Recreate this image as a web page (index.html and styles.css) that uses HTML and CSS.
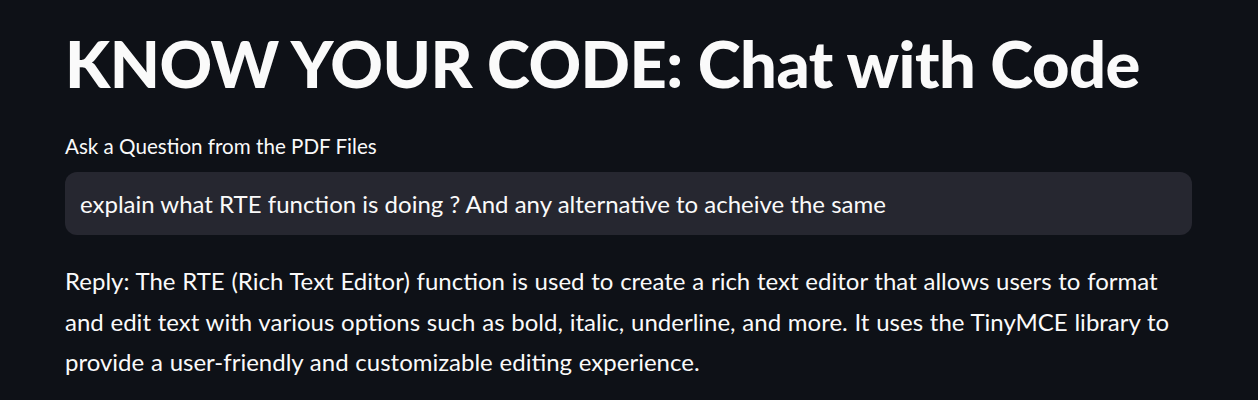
FILE: index.html
```html
<!DOCTYPE html>
<html lang="en">
<head>
<meta charset="utf-8">
<title>KNOW YOUR CODE</title>
<link rel="stylesheet" href="styles.css">
</head>
<body>
<main class="app">
  <h1 class="title">KNOW YOUR CODE: Chat with Code</h1>
  <div class="field">
    <label class="field-label" for="q">Ask a Question from the PDF Files</label>
    <div class="input-wrap">
      <input id="q" class="input" type="text" value="explain what RTE function is doing ? And any alternative to acheive the same">
    </div>
  </div>
  <p class="reply">Reply: The RTE (Rich Text Editor) function is used to create a rich text editor that allows users to format and edit text with various options such as bold, italic, underline, and more. It uses the TinyMCE library to provide a user-friendly and customizable editing experience.</p>
</main>
</body>
</html>
```
FILE: styles.css
```css
html, body {
  margin: 0;
  padding: 0;
  background: #0e1117;
  color: #fafafa;
  font-family: "Lato", "Noto Sans", sans-serif;
}

.app {
  width: 1127px;
  padding: 22px 0 0 65px;
  display: flex;
  flex-direction: column;
}

.title {
  margin: 0;
  font-size: 65px;
  font-weight: 900;
  line-height: 82px;
  letter-spacing: -0.5px;
}

.field {
  margin-top: 28px;
  display: flex;
  flex-direction: column;
  gap: 12px;
}

.field-label {
  font-size: 20.6px;
  line-height: 28px;
}

.input-wrap {
  background: #262730;
  border-radius: 12px;
  height: 63px;
  display: flex;
  align-items: center;
  padding: 0 15px;
}

.input {
  flex: 1;
  border: none;
  outline: none;
  background: transparent;
  color: #fafafa;
  font-family: inherit;
  font-size: 24px;
  padding: 0;
}

.reply {
  margin: 26px 0 0;
  max-width: 1110px;
  font-size: 24px;
  line-height: 40.5px;
  word-spacing: 0.6px;
}
```
